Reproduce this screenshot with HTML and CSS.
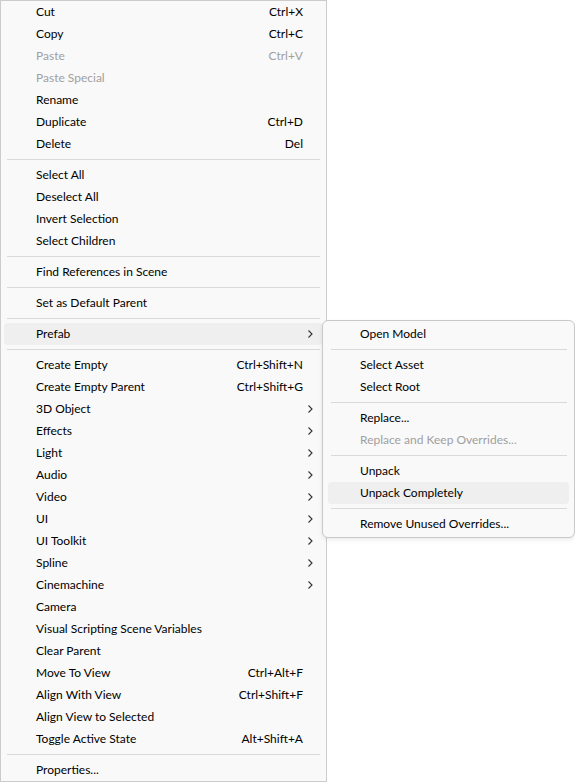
FILE: index.html
```html
<!DOCTYPE html>
<html>
<head>
<meta charset="utf-8">
<link rel="stylesheet" href="styles.css">
</head>
<body>
<div class="page">
  <div class="menu main">
    <div class="item"><span class="label">Cut</span><span class="key">Ctrl+X</span><span class="sub"></span></div>
    <div class="item"><span class="label">Copy</span><span class="key">Ctrl+C</span><span class="sub"></span></div>
    <div class="item disabled"><span class="label">Paste</span><span class="key">Ctrl+V</span><span class="sub"></span></div>
    <div class="item disabled"><span class="label">Paste Special</span><span class="key"></span><span class="sub"></span></div>
    <div class="item"><span class="label">Rename</span><span class="key"></span><span class="sub"></span></div>
    <div class="item"><span class="label">Duplicate</span><span class="key">Ctrl+D</span><span class="sub"></span></div>
    <div class="item"><span class="label">Delete</span><span class="key">Del</span><span class="sub"></span></div>
    <div class="sep"></div>
    <div class="item"><span class="label">Select All</span><span class="key"></span><span class="sub"></span></div>
    <div class="item"><span class="label">Deselect All</span><span class="key"></span><span class="sub"></span></div>
    <div class="item"><span class="label">Invert Selection</span><span class="key"></span><span class="sub"></span></div>
    <div class="item"><span class="label">Select Children</span><span class="key"></span><span class="sub"></span></div>
    <div class="sep"></div>
    <div class="item"><span class="label">Find References in Scene</span><span class="key"></span><span class="sub"></span></div>
    <div class="sep"></div>
    <div class="item"><span class="label">Set as Default Parent</span><span class="key"></span><span class="sub"></span></div>
    <div class="sep"></div>
    <div class="item hover"><span class="label">Prefab</span><span class="key"></span><span class="sub"><svg class="chev" width="5" height="8" viewBox="0 0 5 8"><polyline points="0.5,0.5 4,4 0.5,7.5" fill="none" stroke="#333" stroke-width="1.1"/></svg></span></div>
    <div class="sep"></div>
    <div class="item"><span class="label">Create Empty</span><span class="key">Ctrl+Shift+N</span><span class="sub"></span></div>
    <div class="item"><span class="label">Create Empty Parent</span><span class="key">Ctrl+Shift+G</span><span class="sub"></span></div>
    <div class="item"><span class="label">3D Object</span><span class="key"></span><span class="sub"><svg class="chev" width="5" height="8" viewBox="0 0 5 8"><polyline points="0.5,0.5 4,4 0.5,7.5" fill="none" stroke="#333" stroke-width="1.1"/></svg></span></div>
    <div class="item"><span class="label">Effects</span><span class="key"></span><span class="sub"><svg class="chev" width="5" height="8" viewBox="0 0 5 8"><polyline points="0.5,0.5 4,4 0.5,7.5" fill="none" stroke="#333" stroke-width="1.1"/></svg></span></div>
    <div class="item"><span class="label">Light</span><span class="key"></span><span class="sub"><svg class="chev" width="5" height="8" viewBox="0 0 5 8"><polyline points="0.5,0.5 4,4 0.5,7.5" fill="none" stroke="#333" stroke-width="1.1"/></svg></span></div>
    <div class="item"><span class="label">Audio</span><span class="key"></span><span class="sub"><svg class="chev" width="5" height="8" viewBox="0 0 5 8"><polyline points="0.5,0.5 4,4 0.5,7.5" fill="none" stroke="#333" stroke-width="1.1"/></svg></span></div>
    <div class="item"><span class="label">Video</span><span class="key"></span><span class="sub"><svg class="chev" width="5" height="8" viewBox="0 0 5 8"><polyline points="0.5,0.5 4,4 0.5,7.5" fill="none" stroke="#333" stroke-width="1.1"/></svg></span></div>
    <div class="item"><span class="label">UI</span><span class="key"></span><span class="sub"><svg class="chev" width="5" height="8" viewBox="0 0 5 8"><polyline points="0.5,0.5 4,4 0.5,7.5" fill="none" stroke="#333" stroke-width="1.1"/></svg></span></div>
    <div class="item"><span class="label">UI Toolkit</span><span class="key"></span><span class="sub"><svg class="chev" width="5" height="8" viewBox="0 0 5 8"><polyline points="0.5,0.5 4,4 0.5,7.5" fill="none" stroke="#333" stroke-width="1.1"/></svg></span></div>
    <div class="item"><span class="label">Spline</span><span class="key"></span><span class="sub"><svg class="chev" width="5" height="8" viewBox="0 0 5 8"><polyline points="0.5,0.5 4,4 0.5,7.5" fill="none" stroke="#333" stroke-width="1.1"/></svg></span></div>
    <div class="item"><span class="label">Cinemachine</span><span class="key"></span><span class="sub"><svg class="chev" width="5" height="8" viewBox="0 0 5 8"><polyline points="0.5,0.5 4,4 0.5,7.5" fill="none" stroke="#333" stroke-width="1.1"/></svg></span></div>
    <div class="item"><span class="label">Camera</span><span class="key"></span><span class="sub"></span></div>
    <div class="item"><span class="label">Visual Scripting Scene Variables</span><span class="key"></span><span class="sub"></span></div>
    <div class="item"><span class="label">Clear Parent</span><span class="key"></span><span class="sub"></span></div>
    <div class="item"><span class="label">Move To View</span><span class="key">Ctrl+Alt+F</span><span class="sub"></span></div>
    <div class="item"><span class="label">Align With View</span><span class="key">Ctrl+Shift+F</span><span class="sub"></span></div>
    <div class="item"><span class="label">Align View to Selected</span><span class="key"></span><span class="sub"></span></div>
    <div class="item"><span class="label">Toggle Active State</span><span class="key">Alt+Shift+A</span><span class="sub"></span></div>
    <div class="sep"></div>
    <div class="item"><span class="label">Properties...</span><span class="key"></span><span class="sub"></span></div>
  </div>

  <div class="menu submenu">
    <div class="item"><span class="label">Open Model</span></div>
    <div class="sep"></div>
    <div class="item"><span class="label">Select Asset</span></div>
    <div class="item"><span class="label">Select Root</span></div>
    <div class="sep"></div>
    <div class="item"><span class="label">Replace...</span></div>
    <div class="item disabled"><span class="label">Replace and Keep Overrides...</span></div>
    <div class="sep"></div>
    <div class="item"><span class="label">Unpack</span></div>
    <div class="item hover"><span class="label">Unpack Completely</span></div>
    <div class="sep"></div>
    <div class="item"><span class="label">Remove Unused Overrides...</span></div>
  </div>
</div>
</body>
</html>
```

FILE: styles.css
```css
html, body {
  margin: 0;
  padding: 0;
  background: #ffffff;
}

body {
  font-family: "Lato", "Noto Sans", sans-serif;
  font-size: 12px;
  color: #000000;
}

.page {
  position: relative;
  width: 575px;
  height: 782px;
}

.menu {
  background: #f9f9f9;
  border: 1px solid #cccccc;
  box-sizing: border-box;
}

.main {
  width: 327px;
  height: 782px;
  padding: 0;
}

.item {
  display: grid;
  grid-template-columns: 1fr auto 20px;
  align-items: center;
  box-sizing: border-box;
  height: 22px;
  margin: 0 3px;
  padding-left: 32px;
  padding-bottom: 2px;
  border-radius: 4px;
  white-space: nowrap;
}

.item .key {
  text-align: right;
}

.item .sub {
  display: flex;
  align-items: center;
  padding-left: 5px;
  padding-top: 2px;
}

.item.hover {
  background: #efefef;
}

.item.disabled {
  color: #a0a0a0;
}

.sep {
  height: 1px;
  margin: 4px 6px;
  background: #d9d9d9;
}

.submenu {
  position: absolute;
  left: 322px;
  top: 320px;
  width: 253px;
  height: 218px;
  padding: 2px 0 2px;
  border-radius: 6px;
  border-color: #c9c9c9;
  box-shadow: 0 2px 4px rgba(0, 0, 0, 0.08);
}

.submenu .item {
  display: flex;
  margin: 0 5px;
}

.submenu .sep {
  margin: 4px 7px 4px 8px;
}
```
